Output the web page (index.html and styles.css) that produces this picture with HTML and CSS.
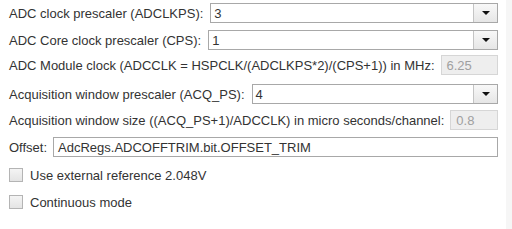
FILE: index.html
```html
<!DOCTYPE html>
<html lang="en">
<head>
    <meta charset="UTF-8">
    <title>ADC Settings</title>
    <link rel="stylesheet" href="styles.css">
</head>
<body>
    <div class="settings">
        <div class="row r1">
            <label class="label">ADC clock prescaler (ADCLKPS):</label>
            <div class="combo"><span class="value">3</span><span class="arrow"></span></div>
        </div>
        <div class="row r2">
            <label class="label">ADC Core clock prescaler (CPS):</label>
            <div class="combo"><span class="value">1</span><span class="arrow"></span></div>
        </div>
        <div class="row r3">
            <label class="label">ADC Module clock (ADCCLK = HSPCLK/(ADCLKPS*2)/(CPS+1)) in MHz:</label>
            <div class="field readonly">6.25</div>
        </div>
        <div class="row r4">
            <label class="label">Acquisition window prescaler (ACQ_PS):</label>
            <div class="combo"><span class="value">4</span><span class="arrow"></span></div>
        </div>
        <div class="row r5">
            <label class="label">Acquisition window size ((ACQ_PS+1)/ADCCLK) in micro seconds/channel:</label>
            <div class="field readonly">0.8</div>
        </div>
        <div class="row r6">
            <label class="label">Offset:</label>
            <div class="field">AdcRegs.ADCOFFTRIM.bit.OFFSET_TRIM</div>
        </div>
        <div class="check c1">
            <span class="box"></span>
            <span class="label">Use external reference 2.048V</span>
        </div>
        <div class="check c2">
            <span class="box"></span>
            <span class="label">Continuous mode</span>
        </div>
    </div>
</body>
</html>
```

FILE: styles.css
```css
body {
    margin: 0;
    background: #fff;
    font-family: 'Liberation Sans', Arial, sans-serif;
    font-size: 13px;
    color: #333;
}

.settings {
    width: 512px;
    height: 229px;
    box-sizing: border-box;
    padding: 3px 8px 0 9px;
    border-right: 6px solid #f6f6f6;
}

.row {
    display: flex;
    align-items: center;
    height: 20px;
}

.r2 { margin-top: 7px; }
.r3 { margin-top: 5px; }
.r4 { margin-top: 9px; }
.r5 { margin-top: 6px; }
.r6 { margin-top: 7px; }

.label {
    white-space: nowrap;
    margin-right: 6px;
}

.r1 .label,
.r2 .label,
.r4 .label {
    margin-right: 7px;
}

.combo,
.field {
    flex: 1;
    height: 20px;
    box-sizing: border-box;
    border: 1px solid #a8a8a8;
    background: #fff;
    display: flex;
    align-items: center;
}

.combo .value {
    flex: 1;
    padding-left: 3px;
}

.combo .arrow {
    width: 23px;
    height: 100%;
    border-left: 1px solid #c4c4c4;
    background: linear-gradient(#f8f8f8, #e6e6e6);
    position: relative;
}

.combo .arrow::after {
    content: '';
    position: absolute;
    left: 8px;
    top: 7px;
    border-left: 4px solid transparent;
    border-right: 4px solid transparent;
    border-top: 4px solid #111;
}

.field {
    padding-left: 4px;
}

.field.readonly {
    background: #eeeeee;
    border-color: #d6d6d6;
    color: #a0a0a0;
    padding-left: 5px;
}

.check {
    display: flex;
    align-items: center;
    height: 14px;
}

.c1 { margin-top: 11px; }
.c2 { margin-top: 13px; }

.box {
    width: 14px;
    height: 14px;
    box-sizing: border-box;
    border: 1px solid #b4b4b4;
    background: linear-gradient(#f4f4f4, #e4e4e4);
    margin-right: 7px;
}
```
